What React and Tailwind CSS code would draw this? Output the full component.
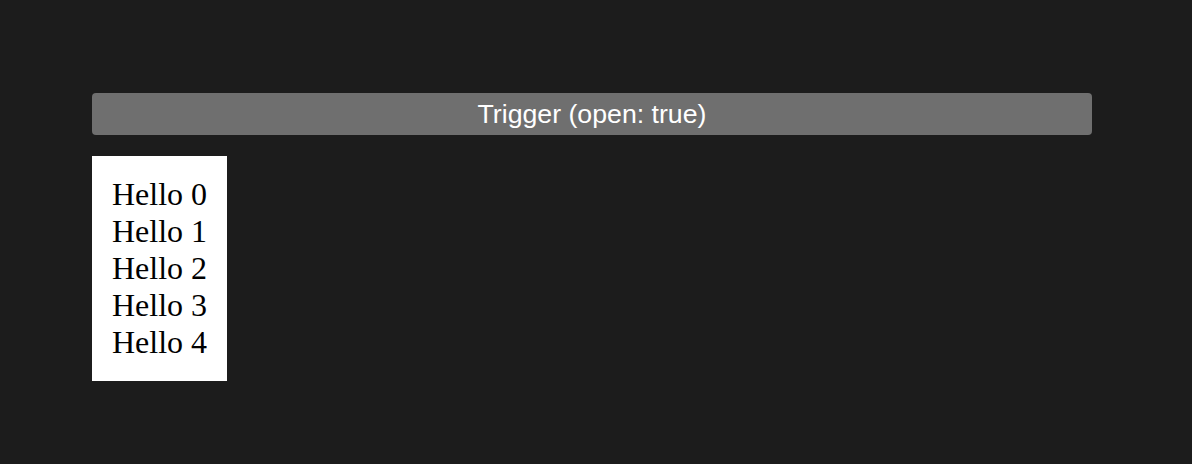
export default function App() {
  const items = [0, 1, 2, 3, 4]
  return (
    <div className="min-h-screen bg-[#1c1c1c] pt-[93px] pl-[92px]">
      <button className="block w-[1000px] h-[42px] bg-[#6f6f6f] rounded-[4px] text-white text-[26.7px] leading-none font-['Liberation_Sans',Arial,sans-serif]">
        Trigger (open: true)
      </button>
      <div className="mt-[21px] inline-block bg-white p-[20px] text-black text-[32px] leading-[37px] font-['Liberation_Serif','Times_New_Roman',serif]">
        {items.map((i) => (
          <div key={i}>Hello {i}</div>
        ))}
      </div>
    </div>
  )
}
